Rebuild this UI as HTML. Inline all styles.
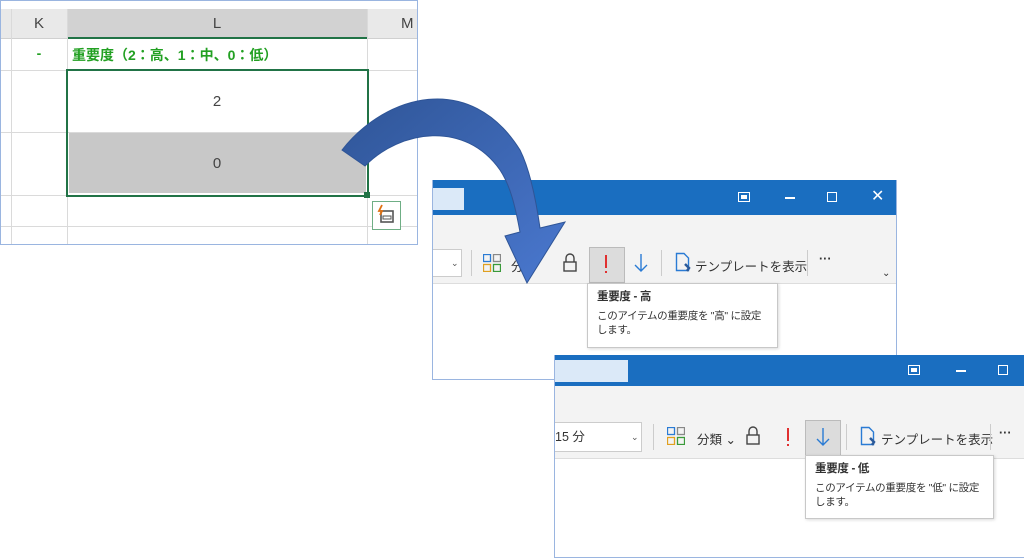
<!DOCTYPE html>
<html><head><meta charset="utf-8"><style>
body{margin:0;width:1024px;height:557px;background:#fff;position:relative;overflow:hidden;font-family:"Liberation Sans","Noto Sans CJK JP",sans-serif}
.a{position:absolute}
.tb{background:#1a6ec0;overflow:hidden}
.tool{background:#f3f3f3}
.tt{background:#fff;border:1px solid #c8c8c8;box-shadow:1px 1px 3px rgba(0,0,0,.15);font-size:10.5px;color:#333;line-height:14px;padding:6px 9px;box-sizing:border-box;letter-spacing:-0.3px}
.tt b{display:block;font-size:11.5px;margin-bottom:5px;color:#333}
.it{position:absolute;font-size:12.5px;color:#333}
.sep{position:absolute;width:1px;height:26px;background:#ccc}
svg.i{position:absolute}
</style></head><body>
<!-- Excel -->
<div class="a" style="left:0;top:0;width:416px;height:243px;border:1px solid #9ab5e0;overflow:hidden;background:#fff">
 <div class="a" style="left:0;top:8px;width:420px;height:29px;background:#e9e9e9;border-bottom:1px solid #d0d0d0"></div>
 <div class="a" style="left:66px;top:8px;width:300px;height:28px;background:#d2d2d2;border-bottom:2px solid #217346"></div>
 <div class="a" style="left:10px;top:8px;width:1px;height:240px;background:#dadada"></div>
 <div class="a" style="left:66px;top:8px;width:1px;height:240px;background:#dadada"></div>
 <div class="a" style="left:366px;top:8px;width:1px;height:240px;background:#dadada"></div>
 <div class="a" style="left:0;top:69px;width:420px;height:1px;background:#dadada"></div>
 <div class="a" style="left:0;top:131px;width:420px;height:1px;background:#dadada"></div>
 <div class="a" style="left:0;top:194px;width:420px;height:1px;background:#dadada"></div>
 <div class="a" style="left:0;top:225px;width:420px;height:1px;background:#dadada"></div>
 <div class="a" style="left:10px;top:14px;width:56px;text-align:center;font-size:15px;color:#444">K</div>
 <div class="a" style="left:66px;top:14px;width:300px;text-align:center;font-size:15px;color:#444">L</div>
 <div class="a" style="left:400px;top:14px;font-size:15px;color:#444">M</div>
 <div class="a" style="left:10px;top:44px;width:56px;text-align:center;font-size:14px;color:#22a022;font-weight:bold">-</div>
 <div class="a" style="left:71px;top:44px;font-size:14px;color:#22a022;font-weight:bold">重要度（2：高、1：中、0：低）</div>
 <div class="a" style="left:68px;top:132px;width:297px;height:60px;background:#c8c8c8"></div>
 <div class="a" style="left:65px;top:68px;width:299px;height:124px;border:2px solid #217346"></div>
 <div class="a" style="left:363px;top:191px;width:6px;height:6px;background:#217346"></div>
 <div class="a" style="left:66px;top:92px;width:300px;text-align:center;font-size:15px;color:#444">2</div>
 <div class="a" style="left:66px;top:154px;width:300px;text-align:center;font-size:15px;color:#444">0</div>
 <div class="a" style="left:371px;top:200px;width:27px;height:27px;border:1px solid #6fae85;background:#fff">
  <svg width="27" height="27"><rect x="8" y="9" width="12" height="11" fill="none" stroke="#555" stroke-width="1.6"/><rect x="10" y="14" width="8" height="3" fill="none" stroke="#555"/><path d="M9 3 L6 9 L9 9 L7 13" fill="none" stroke="#e07010" stroke-width="1.8"/></svg>
 </div>
</div>
<!-- Window 1 -->
<div class="a" style="left:432px;top:180px;width:463px;height:199px;border:1px solid #9ab5e0;border-top:none;background:#fff;overflow:hidden">
 <div class="a tb" style="left:0;top:0;width:463px;height:35px"></div>
 <div class="a" style="left:0;top:8px;width:31px;height:22px;background:#dbe9f8"></div>
 <svg class="i" style="left:305px;top:12px" width="12" height="10"><rect x="0.5" y="0.5" width="11" height="9" fill="none" stroke="#fff"/><rect x="3" y="3" width="6" height="4" fill="#fff"/></svg>
 <div class="a" style="left:352px;top:17px;width:10px;height:1.5px;background:#fff"></div>
 <div class="a" style="left:394px;top:12px;width:8px;height:8px;border:1.5px solid #fff"></div>
 <div class="a" style="left:438px;top:6px;color:#fff;font-size:16px">✕</div>
 <div class="a tool" style="left:0;top:35px;width:463px;height:68px;border-bottom:1px solid #ddd"></div>
 <div class="a" style="left:0;top:69px;width:28px;height:26px;background:#fff;border:1px solid #ccc;border-left:none;font-size:9px;color:#555;text-align:right;line-height:26px">⌄&nbsp;</div>
 <div class="sep" style="left:38px;top:70px"></div>
 <svg class="i" style="left:50px;top:74px" width="18" height="18"><rect x="0.5" y="0.5" width="7" height="7" fill="none" stroke="#2a7bd4" stroke-width="1.3"/><rect x="10.5" y="0.5" width="7" height="7" fill="none" stroke="#888" stroke-width="1.3"/><rect x="0.5" y="10.5" width="7" height="7" fill="none" stroke="#e0a020" stroke-width="1.3"/><rect x="10.5" y="10.5" width="7" height="7" fill="none" stroke="#3a9a3a" stroke-width="1.3"/></svg>
 <div class="it" style="left:78px;top:76px">分</div>
 <svg class="i" style="left:130px;top:73px" width="14" height="19"><path d="M3 9 V5 A4 4 0 0 1 11 5 V9" fill="none" stroke="#444" stroke-width="1.4"/><rect x="1" y="9" width="12" height="9" fill="none" stroke="#444" stroke-width="1.4"/></svg>
 <div class="a" style="left:156px;top:67px;width:34px;height:34px;background:#dcdcdc;border:1px solid #bbb"></div>
 <div class="a" style="left:172px;top:75px;width:2px;height:13px;background:#e03030"></div>
 <div class="a" style="left:172px;top:91px;width:2px;height:2px;background:#e03030"></div>
 <svg class="i" style="left:201px;top:73px" width="14" height="20"><path d="M7 1 V18 M1 12 L7 18 L13 12" fill="none" stroke="#2a7bd4" stroke-width="1.4"/></svg>
 <div class="sep" style="left:228px;top:70px"></div>
 <svg class="i" style="left:242px;top:72px" width="16" height="20"><path d="M1.5 1.5 H9 L13.5 6 V18.5 H1.5 Z" fill="none" stroke="#2a7bd4" stroke-width="1.4"/><path d="M10 12 L14 16 L12 19" stroke="#2a5a9a" stroke-width="2.5" fill="none"/></svg>
 <div class="it" style="left:262px;top:76px">テンプレートを表示</div>
 <div class="sep" style="left:374px;top:70px"></div>
 <div class="it" style="left:386px;top:72px;font-weight:bold">···</div>
 <div class="it" style="left:449px;top:88px;font-size:10px">⌄</div>
</div>
<div class="a tt" style="left:587px;top:283px;width:191px;height:65px"><b>重要度 - 高</b>このアイテムの重要度を "高" に設定<br>します。</div>
<!-- Window 2 -->
<div class="a" style="left:554px;top:355px;width:470px;height:202px;border-left:1px solid #9ab5e0;border-bottom:1px solid #9ab5e0;background:#fff;overflow:hidden">
 <div class="a tb" style="left:0;top:0;width:470px;height:31px"></div>
 <div class="a" style="left:0;top:5px;width:73px;height:22px;background:#dbe9f8"></div>
 <svg class="i" style="left:353px;top:10px" width="12" height="10"><rect x="0.5" y="0.5" width="11" height="9" fill="none" stroke="#fff"/><rect x="3" y="3" width="6" height="4" fill="#fff"/></svg>
 <div class="a" style="left:401px;top:15px;width:10px;height:1.5px;background:#fff"></div>
 <div class="a" style="left:443px;top:10px;width:8px;height:8px;border:1.5px solid #fff"></div>
 <div class="a tool" style="left:0;top:31px;width:470px;height:72px;border-bottom:1px solid #ddd"></div>
 <div class="a" style="left:0;top:67px;width:87px;height:30px;background:#fff;border:1px solid #ccc;border-left:none;box-sizing:border-box;font-size:12.5px;color:#333;line-height:28px">15 分<span style="float:right;font-size:9px;color:#555">⌄&nbsp;</span></div>
 <div class="sep" style="left:98px;top:69px"></div>
 <svg class="i" style="left:112px;top:72px" width="18" height="18"><rect x="0.5" y="0.5" width="7" height="7" fill="none" stroke="#2a7bd4" stroke-width="1.3"/><rect x="10.5" y="0.5" width="7" height="7" fill="none" stroke="#888" stroke-width="1.3"/><rect x="0.5" y="10.5" width="7" height="7" fill="none" stroke="#e0a020" stroke-width="1.3"/><rect x="10.5" y="10.5" width="7" height="7" fill="none" stroke="#3a9a3a" stroke-width="1.3"/></svg>
 <div class="it" style="left:142px;top:74px">分類 ⌄</div>
 <svg class="i" style="left:191px;top:71px" width="14" height="19"><path d="M3 9 V5 A4 4 0 0 1 11 5 V9" fill="none" stroke="#444" stroke-width="1.4"/><rect x="1" y="9" width="12" height="9" fill="none" stroke="#444" stroke-width="1.4"/></svg>
 <div class="a" style="left:232px;top:73px;width:2px;height:13px;background:#e03030"></div>
 <div class="a" style="left:232px;top:89px;width:2px;height:2px;background:#e03030"></div>
 <div class="a" style="left:250px;top:65px;width:34px;height:36px;background:#dcdcdc;border:1px solid #bbb"></div>
 <svg class="i" style="left:261px;top:72px" width="14" height="20"><path d="M7 1 V18 M1 12 L7 18 L13 12" fill="none" stroke="#2a7bd4" stroke-width="1.4"/></svg>
 <div class="sep" style="left:291px;top:69px"></div>
 <svg class="i" style="left:305px;top:71px" width="16" height="20"><path d="M1.5 1.5 H9 L13.5 6 V18.5 H1.5 Z" fill="none" stroke="#2a7bd4" stroke-width="1.4"/><path d="M10 12 L14 16 L12 19" stroke="#2a5a9a" stroke-width="2.5" fill="none"/></svg>
 <div class="it" style="left:326px;top:74px">テンプレートを表示</div>
 <div class="sep" style="left:435px;top:69px"></div>
 <div class="it" style="left:444px;top:71px;font-weight:bold">···</div>
</div>
<div class="a tt" style="left:805px;top:455px;width:189px;height:64px"><b>重要度 - 低</b>このアイテムの重要度を "低" に設定<br>します。</div>
<!-- Arrow -->
<svg class="a" style="left:0;top:0" width="1024" height="557">
 <defs><linearGradient id="g" x1="0" y1="0" x2="1" y2="1"><stop offset="0" stop-color="#2f5597"/><stop offset="1" stop-color="#4a78cf"/></linearGradient></defs>
 <path d="M342,150 C385,95 470,70 520,150 C530,170 536,200 540,228 L565,222 L527,283 L505,236 L520,232 C515,205 510,185 500,170 C465,120 400,130 365,166 Z" fill="url(#g)" stroke="#2f5597" stroke-width="1"/>
</svg>
</body></html>
